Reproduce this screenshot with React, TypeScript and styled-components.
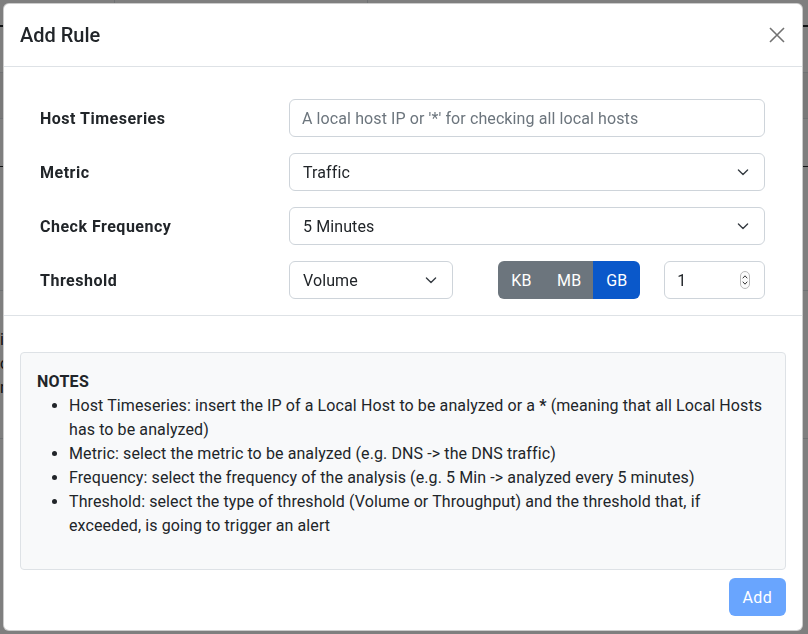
import React from 'react';
import styled, { createGlobalStyle } from 'styled-components';

const GlobalStyle = createGlobalStyle`
  html, body { margin: 0; padding: 0; }
  body {
    font-family: Roboto, "Liberation Sans", Arial, sans-serif;
    color: #212529;
    background: #fff;
    width: 808px;
    height: 634px;
    overflow: hidden;
  }
  * { box-sizing: border-box; }
`;

/* ---------- page behind the modal ---------- */
const Page = styled.div`
  width: 808px;
  height: 634px;
  overflow: hidden;
  display: flex;
  flex-direction: column;
`;

const BgHeader = styled.div`
  height: 27px;
  flex: none;
  display: grid;
  grid-template-columns: 114px 253px 1fr;
  border-bottom: 2px solid #212529;
  font-weight: 700;
  font-size: 16px;
  overflow: hidden;
`;

const BgHeadCell = styled.div<{ $first?: boolean }>`
  border-left: ${p => (p.$first ? 'none' : '1px solid #dee2e6')};
  text-align: center;
  line-height: 24px;
  overflow: hidden;
  & > span { display: block; margin-top: -20px; }
`;

const BgRow = styled.div<{ $h: number; $dark?: boolean; $stripe?: boolean; $pad?: number }>`
  height: ${p => p.$h}px;
  flex: none;
  border-bottom: 1px solid ${p => (p.$dark ? '#212529' : '#dee2e6')};
  background: ${p => (p.$stripe ? '#f2f2f2' : '#fff')};
  padding: ${p => p.$pad ?? 8}px 0 0 0;
  font-size: 16px;
  line-height: 24px;
`;

const Backdrop = styled.div`
  position: fixed;
  inset: 0;
  background: rgba(0, 0, 0, 0.5);
`;

/* ---------- modal ---------- */
const Modal = styled.div`
  position: fixed;
  top: 3px;
  left: 3px;
  width: 800px;
  background: #fff;
  border: 1px solid rgba(0, 0, 0, 0.2);
  border-radius: 6px;
  display: flex;
  flex-direction: column;
`;

const Header = styled.div`
  display: flex;
  align-items: center;
  justify-content: space-between;
  padding: 16px 16px;
  border-bottom: 1px solid #dee2e6;
`;

const Title = styled.h5`
  margin: 0;
  font-size: 20px;
  line-height: 30px;
  font-weight: 500;
`;

const CloseButton = styled.button`
  border: 0;
  background: transparent;
  padding: 0;
  margin-right: 1px;
  width: 16px;
  height: 16px;
  display: flex;
  align-items: center;
  justify-content: center;
  opacity: 0.55;
  cursor: pointer;
`;

const Body = styled.div`
  padding: 32px 37px 16px 36px;
  display: flex;
  flex-direction: column;
  gap: 16px;
`;

const FormRow = styled.div`
  display: grid;
  grid-template-columns: 249px 1fr;
  align-items: center;
`;

const Label = styled.label`
  font-weight: 700;
  font-size: 16px;
  line-height: 24px;
  letter-spacing: 0.5px;
  padding-top: 2px;
`;

const TextInput = styled.input`
  height: 38px;
  width: 100%;
  border: 1px solid #ced4da;
  border-radius: 6px;
  padding: 0 12px;
  font-family: inherit;
  font-size: 16px;
  letter-spacing: 0.1px;
  color: #212529;
  outline: none;
  &::placeholder { color: #6c757d; opacity: 1; }
`;

const SelectBox = styled.div<{ $width?: number }>`
  height: 38px;
  width: ${p => (p.$width ? `${p.$width}px` : '100%')};
  flex: none;
  border: 1px solid #ced4da;
  border-radius: 6px;
  padding: 0 14px 0 13px;
  display: flex;
  align-items: center;
  justify-content: space-between;
  font-size: 16px;
  letter-spacing: 0.1px;
  color: #212529;
  background: #fff;
`;

const ThresholdControls = styled.div`
  display: flex;
  align-items: center;
`;

const ButtonGroup = styled.div`
  display: flex;
  margin-left: 45px;
  border-radius: 6px;
  overflow: hidden;
`;

const UnitButton = styled.button<{ $active?: boolean }>`
  height: 38px;
  border: 0;
  padding: 0 12px;
  font-family: inherit;
  font-size: 16px;
  letter-spacing: 0.2px;
  color: #fff;
  background: ${p => (p.$active ? '#0a58ca' : '#6c757d')};
  min-width: 47px;
`;

const NumberBox = styled.div`
  margin-left: 24px;
  width: 101px;
  height: 38px;
  border: 1px solid #ced4da;
  border-radius: 6px;
  padding: 0 14px 0 12px;
  display: flex;
  align-items: center;
  justify-content: space-between;
  font-size: 16px;
`;

const Spinner = styled.span`
  width: 10px;
  height: 18px;
  border: 1px solid #b9b9b9;
  border-radius: 5px;
  display: flex;
  align-items: center;
  justify-content: center;
  background: #fbfbfb;
`;

const Footer = styled.div`
  border-top: 1px solid #dee2e6;
  padding: 36px 16px 14px;
  display: flex;
  flex-direction: column;
  align-items: flex-end;
  gap: 8px;
`;

const Notes = styled.div`
  align-self: stretch;
  background: #f8f9fa;
  border: 1px solid #dee2e6;
  border-radius: 4px;
  padding: 17px 16px 15px;
  font-size: 16px;
  line-height: 24px;
  letter-spacing: 0.1px;
`;

const NotesTitle = styled.div`
  font-weight: 700;
  letter-spacing: 0.3px;
`;

const NotesList = styled.ul`
  margin: 0 0 16px;
  padding-left: 32px;
`;

const AddButton = styled.button`
  height: 38px;
  padding: 0 14px;
  border: 0;
  border-radius: 6px;
  background: #0d6efd;
  opacity: 0.62;
  color: #fff;
  font-family: inherit;
  font-size: 16px;
  letter-spacing: 0.3px;
`;

const Chevron = () => (
  <svg width="14" height="10" viewBox="0 0 16 12" fill="none">
    <path d="M2.5 3.5l5.5 5.5 5.5-5.5" stroke="#343a40" strokeWidth="1.6" strokeLinecap="round" strokeLinejoin="round" />
  </svg>
);

const CloseIcon = () => (
  <svg width="16" height="16" viewBox="0 0 16 16" fill="none">
    <path d="M1 1l14 14M15 1L1 15" stroke="#000" strokeWidth="1.6" />
  </svg>
);

const SpinIcon = () => (
  <svg width="8" height="14" viewBox="0 0 8 14" fill="none">
    <path d="M2 5l2-2.2L6 5M2 9l2 2.2L6 9" stroke="#333" strokeWidth="1" strokeLinecap="round" strokeLinejoin="round" />
  </svg>
);

export default function App() {
  return (
    <>
      <GlobalStyle />
      <Page>
        <BgHeader>
          <BgHeadCell $first><span>&nbsp;</span></BgHeadCell>
          <BgHeadCell><span>Metric</span></BgHeadCell>
          <BgHeadCell><span>Check Frequency</span></BgHeadCell>
        </BgHeader>
        <BgRow $h={46} />
        <BgRow $h={46} $stripe />
        <BgRow $h={48} $dark />
        <BgRow $h={124} />
        <BgRow $h={148} $pad={37}>i<br />c<br />n</BgRow>
        <BgRow $h={198} />
      </Page>
      <Backdrop />
      <Modal>
        <Header>
          <Title>Add Rule</Title>
          <CloseButton aria-label="Close"><CloseIcon /></CloseButton>
        </Header>
        <Body>
          <FormRow>
            <Label>Host Timeseries</Label>
            <TextInput placeholder="A local host IP or '*' for checking all local hosts" />
          </FormRow>
          <FormRow>
            <Label>Metric</Label>
            <SelectBox>Traffic<Chevron /></SelectBox>
          </FormRow>
          <FormRow>
            <Label>Check Frequency</Label>
            <SelectBox>5 Minutes<Chevron /></SelectBox>
          </FormRow>
          <FormRow>
            <Label>Threshold</Label>
            <ThresholdControls>
              <SelectBox $width={164}>Volume<Chevron /></SelectBox>
              <ButtonGroup>
                <UnitButton>KB</UnitButton>
                <UnitButton>MB</UnitButton>
                <UnitButton $active>GB</UnitButton>
              </ButtonGroup>
              <NumberBox>1<Spinner><SpinIcon /></Spinner></NumberBox>
            </ThresholdControls>
          </FormRow>
        </Body>
        <Footer>
          <Notes>
            <NotesTitle>NOTES</NotesTitle>
            <NotesList>
              <li>Host Timeseries: insert the IP of a Local Host to be analyzed or a <b>*</b> (meaning that all Local Hosts has to be analyzed)</li>
              <li>Metric: select the metric to be analyzed (e.g. DNS -&gt; the DNS traffic)</li>
              <li>Frequency: select the frequency of the analysis (e.g. 5 Min -&gt; analyzed every 5 minutes)</li>
              <li>Threshold: select the type of threshold (Volume or Throughput) and the threshold that, if exceeded, is going to trigger an alert</li>
            </NotesList>
          </Notes>
          <AddButton disabled>Add</AddButton>
        </Footer>
      </Modal>
    </>
  );
}
